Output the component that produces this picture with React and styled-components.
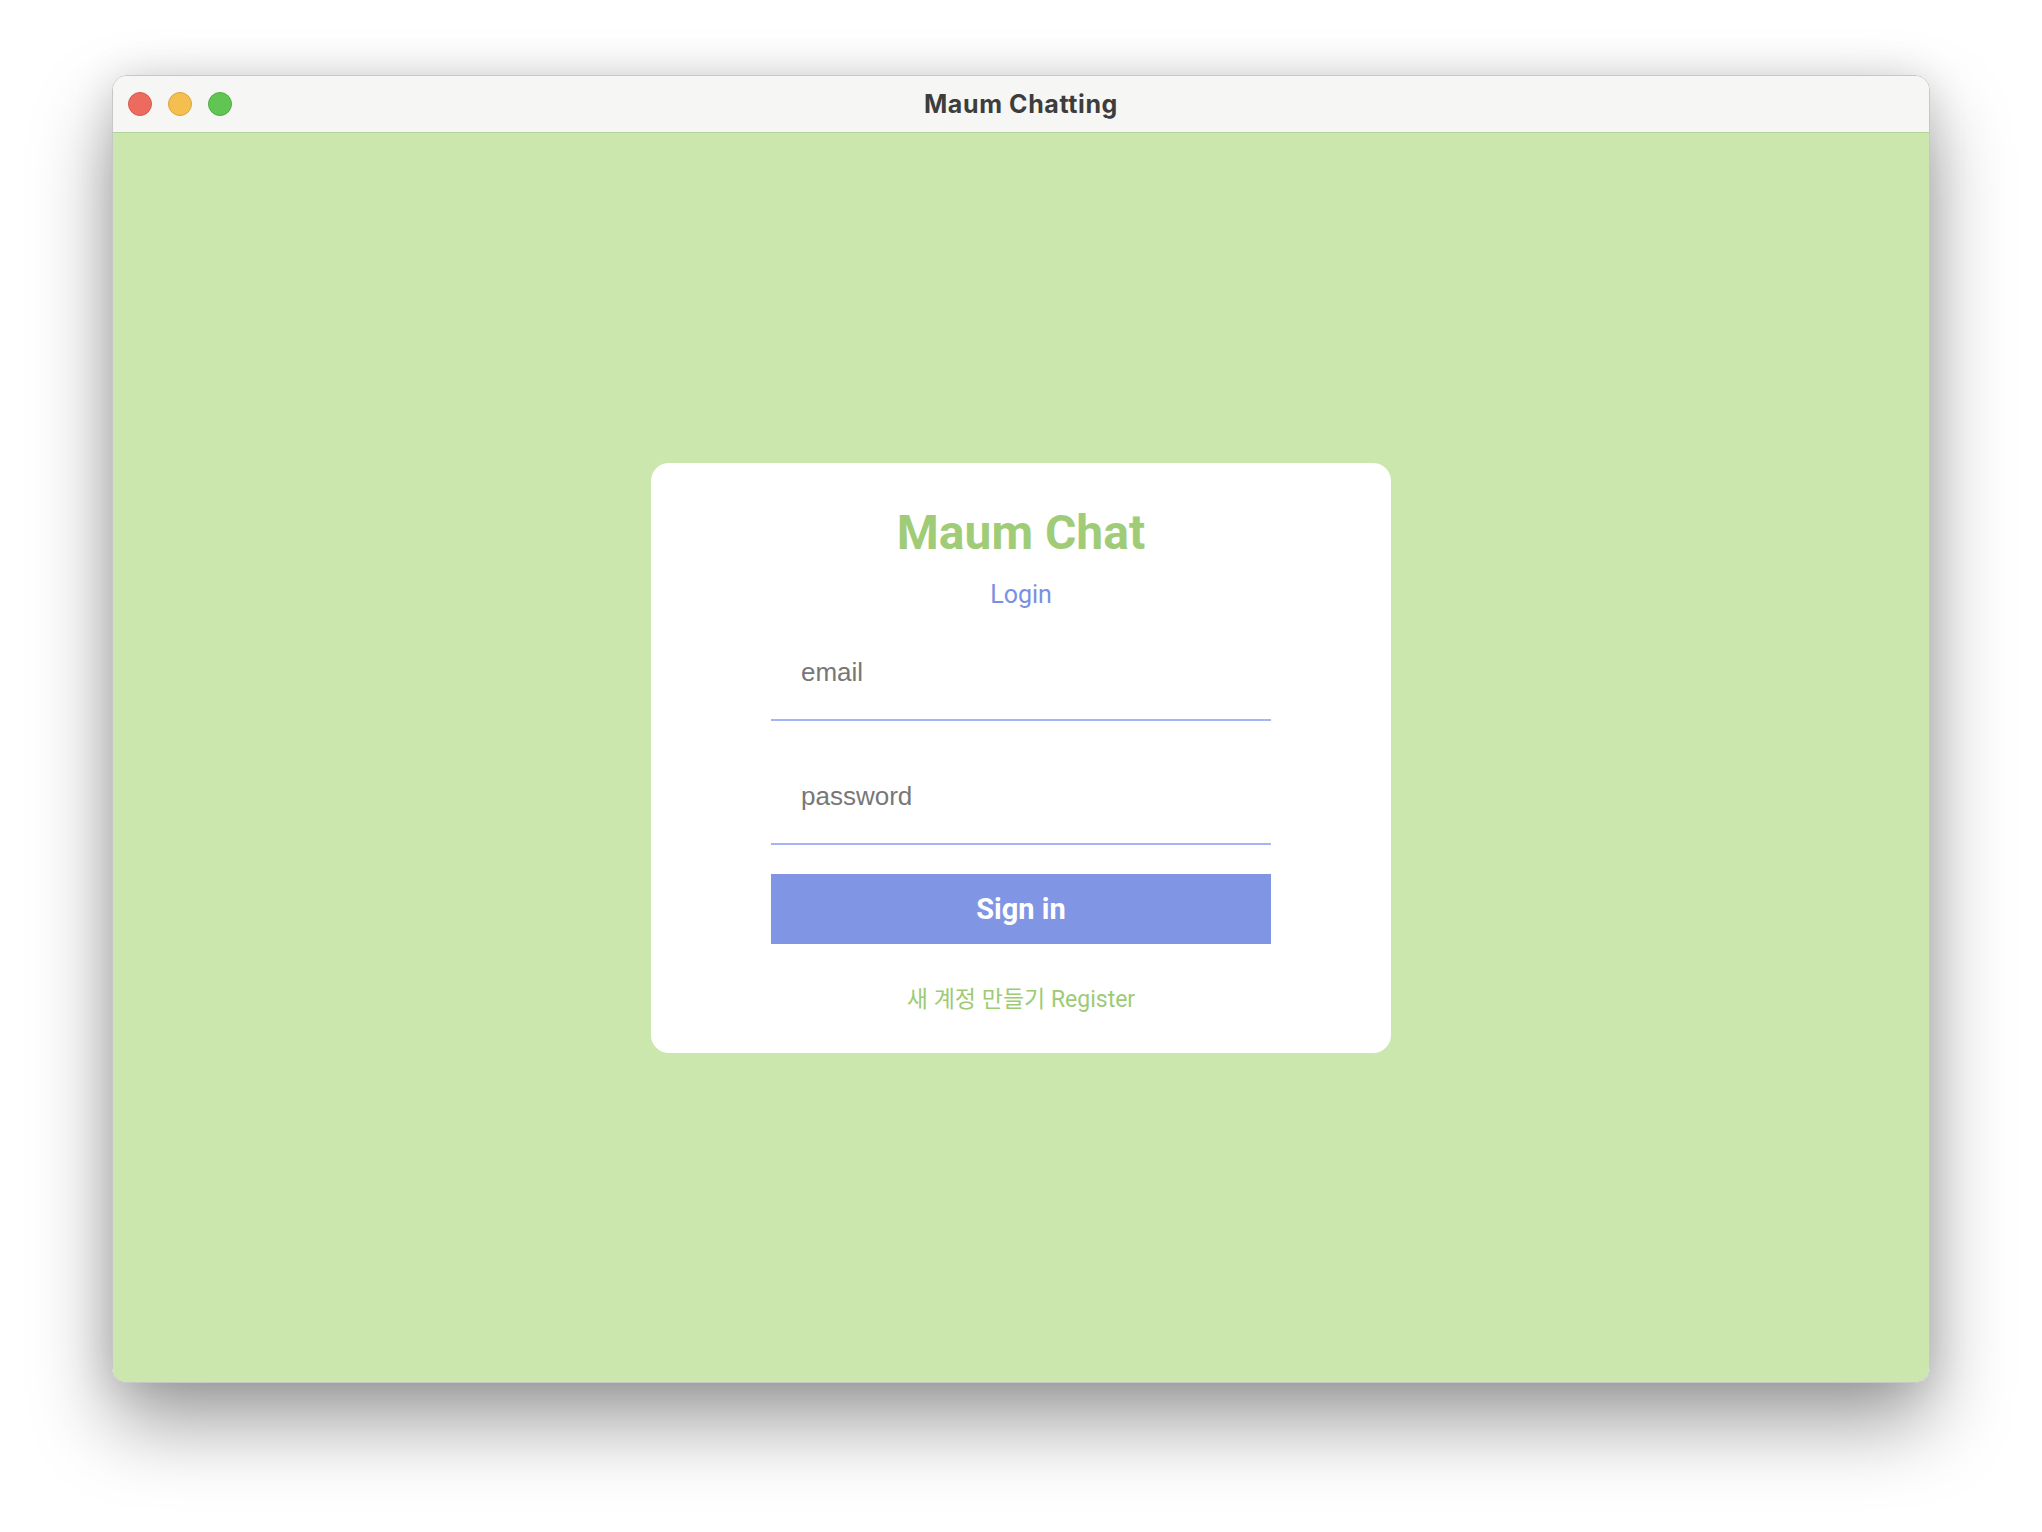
import styled, { createGlobalStyle } from 'styled-components'

const GlobalStyle = createGlobalStyle`
  html, body {
    margin: 0;
    padding: 0;
    background: #ffffff;
  }
  * { box-sizing: border-box; }
`

const Desktop = styled.div`
  width: 2042px;
  height: 1532px;
  padding: 75px 112px 149px;
  background: #ffffff;
`

const Window = styled.div`
  display: flex;
  flex-direction: column;
  width: 100%;
  height: 100%;
  border-radius: 15px;
  overflow: hidden;
  border: 1px solid rgba(0, 0, 0, .22);
  box-shadow: 0 40px 80px rgba(0, 0, 0, .38), 0 0 40px rgba(0, 0, 0, .12);
`

const TitleBar = styled.div`
  flex: 0 0 57px;
  display: grid;
  grid-template-columns: 1fr auto 1fr;
  align-items: center;
  padding: 0 15px;
  background: #f6f6f4;
  border-bottom: 1px solid #b2d09a;
`

const Lights = styled.div`
  display: flex;
  gap: 16px;
`

const Light = styled.span`
  width: 24px;
  height: 24px;
  border-radius: 50%;
  background: ${props => props.color};
  border: 1px solid ${props => props.edge};
`

const WindowTitle = styled.div`
  font-family: Inter, 'Liberation Sans', sans-serif;
  font-weight: 700;
  font-size: 25px;
  color: #3d3d3d;
  letter-spacing: .6px;
`

const Content = styled.main`
  flex: 1;
  display: flex;
  align-items: center;
  justify-content: center;
  background: #cbe7ad;
`

const Card = styled.section`
  width: 740px;
  display: flex;
  flex-direction: column;
  align-items: center;
  padding: 40px 0 39px;
  background: #ffffff;
  border-radius: 18px;
  font-family: Roboto, 'Noto Sans CJK KR', sans-serif;
`

const Heading = styled.h1`
  margin: 0;
  font-size: 48px;
  line-height: 60px;
  font-weight: 700;
  color: #a0cc78;
`

const SubHeading = styled.div`
  margin-top: 17px;
  font-size: 25px;
  line-height: 30px;
  color: #7b8fe3;
`

const Form = styled.form`
  width: 500px;
  margin-top: 16px;
  display: flex;
  flex-direction: column;
  gap: 29px;
`

const Input = styled.input`
  width: 100%;
  height: 95px;
  padding: 0 30px;
  border: none;
  border-bottom: 2px solid #a4b4f4;
  outline: none;
  background: transparent;
  font-family: 'Liberation Sans', Arial, sans-serif;
  font-size: 26px;
  color: #333;
  &::placeholder {
    color: #777777;
  }
`

const SubmitButton = styled.button`
  height: 70px;
  border: none;
  border-radius: 0;
  background: #8096e4;
  color: #ffffff;
  font-family: Roboto, sans-serif;
  font-weight: 700;
  font-size: 29px;
  cursor: pointer;
`

const RegisterLink = styled.a`
  margin-top: 42px;
  font-size: 23px;
  line-height: 28px;
  color: #9dcb74;
  text-decoration: none;
`

export default function App() {
  return (
    <>
      <GlobalStyle />
      <Desktop>
        <Window>
          <TitleBar>
            <Lights>
              <Light color="#ec6a5e" edge="#d65a4f" />
              <Light color="#f4bf4f" edge="#d9a53c" />
              <Light color="#61c554" edge="#4fac45" />
            </Lights>
            <WindowTitle>Maum Chatting</WindowTitle>
            <span />
          </TitleBar>
          <Content>
            <Card>
              <Heading>Maum Chat</Heading>
              <SubHeading>Login</SubHeading>
              <Form onSubmit={e => e.preventDefault()}>
                <Input type="email" placeholder="email" />
                <Input type="password" placeholder="password" />
                <SubmitButton type="submit">Sign in</SubmitButton>
              </Form>
              <RegisterLink href="#">새 계정 만들기 Register</RegisterLink>
            </Card>
          </Content>
        </Window>
      </Desktop>
    </>
  )
}
